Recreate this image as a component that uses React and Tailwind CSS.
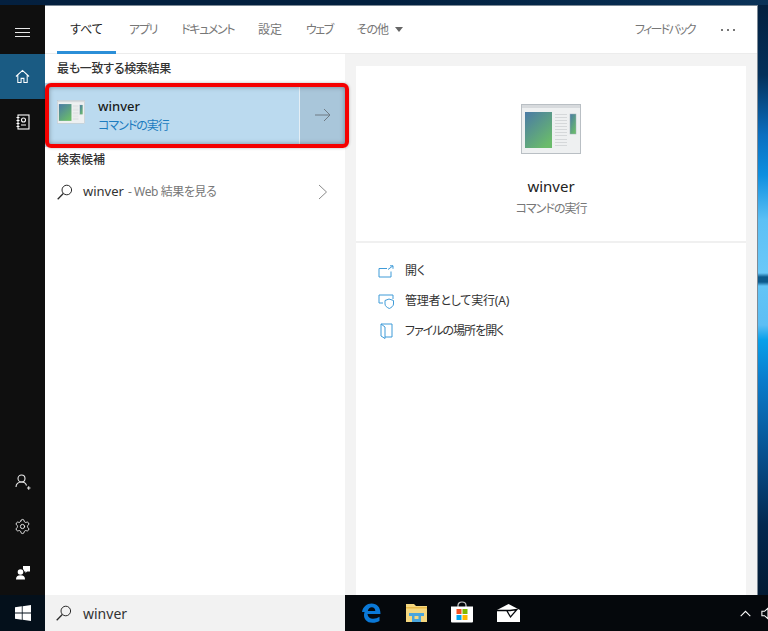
import { Settings } from "lucide-react";

const WinverIcon = ({ className }) => (
  <svg viewBox="0 0 60 50" className={className}>
    <rect x="0.5" y="0.5" width="59" height="49" fill="#eef0f1" stroke="#b9bfc4" />
    <rect x="1" y="1" width="58" height="3" fill="#d7dadd" />
    <defs>
      <linearGradient id="pane" x1="0" y1="0" x2="0.7" y2="1">
        <stop offset="0" stopColor="#4a7aa6" />
        <stop offset="1" stopColor="#6abb6b" />
      </linearGradient>
    </defs>
    <rect x="4" y="8" width="27" height="36" fill="url(#pane)" />
    <rect x="49" y="10" width="6" height="20" fill="url(#pane)" stroke="#9fb0bb" strokeWidth="0.5" />
    {[10, 13, 16, 19, 22, 25, 28, 31, 35, 38, 41].map((y) => (
      <rect key={y} x="34" y={y} width="12" height="1" fill="#d5d8da" />
    ))}
  </svg>
);

const SearchIcon = ({ className }) => (
  <svg viewBox="0 0 16 16" className={className} fill="none" stroke="#2b2b2b" strokeWidth="1">
    <circle cx="9.8" cy="6" r="4.8" />
    <path d="M6.3 9.5 0.7 15.2" strokeWidth="1.3" />
  </svg>
);

const Tab = ({ label, active, className = "" }) => (
  <div
    className={`flex h-[48px] items-center justify-center text-[12px] ${active ? "w-[59px] border-b-[3px] border-[#2b8fd8] pt-[2px] text-[#222]" : "pb-[1px] text-[#777]"} ${className}`}
  >
    {label}
  </div>
);

const Action = ({ icon, label, className = "" }) => (
  <div className="flex h-[30px] items-center">
    <div className="flex w-[28px] justify-center">{icon}</div>
    <span className={`ml-[5px] text-[12px] text-[#333] ${className}`}>{label}</span>
  </div>
);

const SideIcon = ({ children, active }) => (
  <div className={`flex h-[45px] w-[45px] items-center justify-center ${active ? "bg-[#1a5b83]" : ""}`}>
    {children}
  </div>
);

export default function App() {
  return (
    <div className="relative flex h-[631px] w-[768px] flex-col overflow-hidden bg-[#04101f] [font-family:'Noto_Sans','Noto_Sans_CJK_JP',sans-serif] [font-feature-settings:'palt']">
      {/* top wallpaper strip */}
      <div className="h-[5px] bg-gradient-to-r from-[#04203f] via-[#02203f] to-[#0a3258]" />

      <div className="flex h-[590px]">
        {/* sidebar */}
        <aside className="flex w-[45px] flex-col justify-between bg-[#0f0f0f]">
          <div>
            <div className="flex h-[49px] items-center justify-center pt-[5px]">
              <svg viewBox="0 0 15 11" className="h-[11px] w-[15px]" stroke="#e8e8e8" strokeWidth="1">
                <path d="M0 1.5h15M0 5.5h15M0 9.5h15" />
              </svg>
            </div>
            <SideIcon active>
              <svg viewBox="0 0 16 16" className="h-[15px] w-[15px]" fill="none" stroke="#fff" strokeWidth="1.1">
                <path d="M1 8 8 1.5 15 8M3 6.5V14.5H6.5V10H9.5V14.5H13V6.5" />
              </svg>
            </SideIcon>
            <SideIcon>
              <svg viewBox="0 0 16 16" className="h-[16px] w-[16px]" fill="none" stroke="#fff" strokeWidth="1.1">
                <rect x="3" y="1" width="11" height="14" />
                <circle cx="8.5" cy="6" r="2" />
                <path d="M1.5 3.5H4.5M1.5 6.5H4.5M1.5 9.5H4.5M1.5 12.5H4.5M6 11H11" />
              </svg>
            </SideIcon>
          </div>
          <div className="pb-[1px]">
            <SideIcon>
              <svg viewBox="0 0 16 16" className="h-[16px] w-[16px]" fill="none" stroke="#e8e8e8" strokeWidth="1.1">
                <circle cx="6.5" cy="4.5" r="3.5" />
                <path d="M1 13c0-3 2-5 5.5-5s4.500 1.500 5 3.500M12 14h3.500M13.700 12.300v3.500" />
              </svg>
            </SideIcon>
            <SideIcon>
              <Settings size={17} color="#f0f0f0" strokeWidth={1.3} />
            </SideIcon>
            <SideIcon>
              <svg viewBox="0 0 16 16" className="h-[16px] w-[16px]" fill="#fff">
                <circle cx="5.500" cy="8" r="2.800" />
                <path d="M1 15.500c0-3 1.500-4.200 4.500-4.200S10 12.500 10 15.500z" />
                <path d="M8 2h7v5.500h-3l-1.500 1.500V7.500H9.300A4 4 0 0 0 8 5z" />
              </svg>
            </SideIcon>
          </div>
        </aside>

        {/* search panel */}
        <main className="flex w-[713px] flex-col border-r border-t border-[#7d8a96] bg-white">
          <header className="flex h-[48px] items-start justify-between border-b border-[#ececec] pl-[12px] pr-[22px]">
            <nav className="flex gap-[13px]">
              <Tab label="すべて" active />
              <div className="flex gap-[24px]">
                <Tab label="アプリ" className="tracking-[-1.3px]" />
                <Tab label="ドキュメント" className="tracking-[-1.4px]" />
                <Tab label="設定" />
                <Tab label="ウェブ" className="tracking-[-1.500px]" />
                <div className="flex h-[48px] items-center gap-[7px] pb-[1px] text-[12px] tracking-[-1px] text-[#777]">
                  その他
                  <span className="h-0 w-0 border-x-[4.500px] border-t-[5px] border-x-transparent border-t-[#666]" />
                </div>
              </div>
            </nav>
            <div className="flex h-[48px] items-center gap-[26px] text-[12px] text-[#777]">
              <span className="tracking-[-1.7px]">フィードバック</span>
              <div className="flex gap-[4px]">
                <span className="h-[2px] w-[2px] bg-[#777]" />
                <span className="h-[2px] w-[2px] bg-[#777]" />
                <span className="h-[2px] w-[2px] bg-[#777]" />
              </div>
            </div>
          </header>

          <div className="flex flex-1">
            {/* results */}
            <section className="w-[300px]">
              <div className="flex h-[29px] items-center pl-[12px] pt-[1px] text-[12px] font-medium tracking-[-0.3px] text-[#333]">
                最も一致する検索結果
              </div>
              <div className="flex h-[64px] bg-[#bbdaef]">
                <div className="flex w-[254px] items-center">
                  <WinverIcon className="mb-[6px] ml-[12px] h-[24px] w-[28px]" />
                  <div className="ml-[13px] pt-[2px]">
                    <div className="text-[13px] font-medium leading-[19px] text-[#1a1a1a]">winver</div>
                    <div className="text-[12px] leading-[20px] tracking-[-1px] text-[#1c7cc0]">コマンドの実行</div>
                  </div>
                </div>
                <div className="flex flex-1 items-center justify-center border-l border-[#e4eef5] bg-[#a9c6da]">
                  <svg viewBox="0 0 16 14" className="h-[14px] w-[16px]" fill="none" stroke="#6f7b84" strokeWidth="1">
                    <path d="M0 7h15M9 1l6 6-6 6" />
                  </svg>
                </div>
              </div>
              <div className="flex h-[26px] items-center pl-[12px] text-[12px] font-medium text-[#333]">
                検索候補
              </div>
              <div className="flex h-[38px] items-center pl-[12px] pr-[17px]">
                <SearchIcon className="h-[16px] w-[16px]" />
                <span className="ml-[10px] text-[13px] text-[#333]">winver</span>
                <span className="ml-[4px] text-[12px] tracking-[-0.4px] text-[#777]">- Web 結果を見る</span>
                <svg viewBox="0 0 10 16" className="ml-auto h-[16px] w-[10px]" fill="none" stroke="#8a8a8a" strokeWidth="1">
                  <path d="M1 1l7.500 7-7.500 7" />
                </svg>
              </div>
            </section>

            {/* preview */}
            <section className="flex flex-1 bg-[#f3f3f3] px-[11px] pt-[12px]">
              <div className="flex flex-1 flex-col bg-white">
                <div className="flex h-[177px] flex-col items-center border-b-2 border-[#f0f0f0]">
                  <WinverIcon className="mt-[38px] h-[50px] w-[60px]" />
                  <div className="mt-[21px] text-[15px] leading-[22px] text-[#222]">winver</div>
                  <div className="mt-[2px] text-[12px] leading-[20px] tracking-[-1px] text-[#777]">コマンドの実行</div>
                </div>
                <div className="px-[16px] pt-[13px]">
                  <Action
                    label="開く"
                    icon={
                      <svg viewBox="0 0 16 13" className="h-[13px] w-[16px]" fill="none" stroke="#3f9bd8" strokeWidth="1">
                        <path d="M9 3.500H1V12H13V6.500M10 4.500 15 .8M12 .8h3v3" />
                      </svg>
                    }
                  />
                  <Action
                    label="管理者として実行(A)"
                    className="tracking-[-0.2px]"
                    icon={
                      <svg viewBox="0 0 17 15" className="h-[15px] w-[17px]" fill="none" stroke="#3f9bd8" strokeWidth="1">
                        <path d="M5 9H1V1H15V5M7 6.500l4-1.500 4.500 1.500V10c0 2-2 3.500-4.200 4.500C9 13.500 7 12 7 10z" />
                      </svg>
                    }
                  />
                  <Action
                    label="ファイルの場所を開く"
                    className="tracking-[-1px]"
                    icon={
                      <svg viewBox="0 0 13 16" className="h-[16px] w-[13px]" fill="none" stroke="#3f9bd8" strokeWidth="1">
                        <path d="M1 1H12V14H5M1 1V13L5 15.500V4L1 1" />
                      </svg>
                    }
                  />
                </div>
              </div>
            </section>
          </div>
        </main>

        {/* wallpaper on the right */}
        <div className="flex-1 bg-[linear-gradient(to_bottom,#03203f_0px,#04305a_70px,#0a6fc0_130px,#0d8fe0_170px,#5cc0f5_215px,#6ac8f8_268px,#0c5a8c_272px,#0c5a8c_277px,#62c4f6_281px,#5cbef4_320px,#08a0ea_335px,#0a7ccc_375px,#07508e_450px,#03284f_520px,#021a33_590px)]" />
      </div>

      {/* taskbar */}
      <footer className="flex h-[36px] items-center bg-[#05080c]">
        <div className="flex h-full w-[45px] items-center justify-center bg-[#04101b]">
          <svg viewBox="0 0 16 16" className="h-[16px] w-[16px]" fill="#fff">
            <path d="M0 2.300 6.800 1.300V7.600H0zM7.600 1.200 16 0V7.600H7.600zM0 8.400H6.800V14.700L0 13.700zM7.600 8.400H16V16L7.600 14.800z" />
          </svg>
        </div>
        <div className="flex h-full w-[300px] items-center bg-[#f2f2f2] pl-[11px]">
          <SearchIcon className="h-[16px] w-[16px]" />
          <span className="ml-[11px] text-[14px] text-[#333]">winver</span>
        </div>
        <div className="flex flex-1 items-center pl-[16px]">
          <svg viewBox="0 0 20 20" className="h-[20px] w-[20px]">
            <path
              fill="#0a78d7"
              d="M1 9C2 3.500 6 .5 10.500.5 16 .5 19.500 4 19.500 11H6.500c.2 3 2.500 4.700 5.500 4.700 2.500 0 4.700-.7 6.500-2V18c-2 1.200-4.300 1.800-7 1.800C5.500 19.800 2.800 16 3 11.500 3.200 9 4.500 6.800 6.500 5.500 5 7 4.300 8 4 9zM6.800 8h7.500c0-2.300-1.500-3.700-3.500-3.700S7.200 5.700 6.800 8z"
            />
          </svg>
          <svg viewBox="0 0 21 18" className="ml-[25px] h-[18px] w-[21px]">
            <path fill="#f5d77f" d="M0 0h8l2 2h11v16H0z" />
            <path fill="#e8b94a" d="M0 3h21v1.500H0z" />
            <path fill="#4aa5dc" d="M3 9h15v3h-3v6H6v-6H3z" />
            <path fill="#f5d77f" d="M8.500 12h4v3h-4z" />
          </svg>
          <svg viewBox="0 0 22 22" className="ml-[24px] h-[22px] w-[22px] -translate-y-[1px]">
            <path fill="none" stroke="#c9c9c9" strokeWidth="1.200" d="M7 6V4.500C7 2.500 8.500 1 11 1s4 1.500 4 3.500V6" />
            <path fill="#fff" d="M0 5.500h22V20.500a1 1 0 0 1-1 1H1a1 1 0 0 1-1-1z" />
            <rect x="5.500" y="8" width="5" height="5" fill="#f25022" />
            <rect x="11.500" y="8" width="5" height="5" fill="#7fba00" />
            <rect x="5.500" y="14" width="5" height="5" fill="#00a4ef" />
            <rect x="11.500" y="14" width="5" height="5" fill="#ffb900" />
          </svg>
          <svg viewBox="0 0 23 18" className="ml-[24px] h-[18px] w-[23px]">
            <path fill="#fff" d="M0 6 11.500 0 23 6V18H0z" />
            <path fill="none" stroke="#05080c" strokeWidth="1.300" d="M0 6.500H13L20 5.500 13.500 13 10 7" />
          </svg>
          <svg viewBox="0 0 12 8" className="ml-auto h-[7px] w-[11px]" fill="none" stroke="#fff" strokeWidth="1.200">
            <path d="M.5 7 6 1.500 11.500 7" />
          </svg>
          <svg viewBox="0 0 8 14" className="ml-[10px] h-[13px] w-[7px]" fill="none" stroke="#fff" strokeWidth="1.200">
            <path d="M8 1 4 4.500H1V9.500H4L8 13z" />
          </svg>
        </div>
      </footer>

      {/* red highlight drawn over the best match */}
      <div className="absolute left-[45px] top-[83px] h-[65px] w-[304px] rounded-[6px] border-[4px] border-[#f50000] shadow-[inset_0_0_5px_rgba(0,0,0,0.35),0_0_3px_rgba(0,0,0,0.3)]" />
    </div>
  );
}
